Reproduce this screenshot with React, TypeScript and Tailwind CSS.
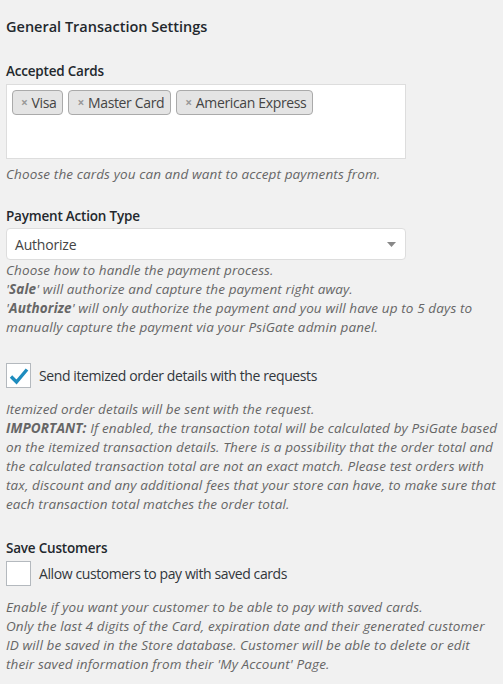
import React from "react";

const Tag = ({ label }: { label: string }) => (
  <span className="flex items-center h-[25px] pl-[8px] pr-[6px] bg-[#e4e4e4] border border-[#aaa] rounded-[4px] text-[14px] text-[#444] tracking-[-0.35px]">
    <span className="text-[#999] text-[12px] mr-[4px] font-bold leading-none">×</span>
    {label}
  </span>
);

const desc = "text-[13.5px] italic text-[#666] leading-[19px] tracking-[0.12px]";

export default function App() {
  return (
    <div
      className="w-[503px] h-[684px] bg-[#f1f1f1] text-[#23282d] overflow-hidden"
      style={{ fontFamily: '"Open Sans", "Noto Sans", sans-serif' }}
    >
      <div className="px-[6px] pt-[17px]">
        <h2 className="text-[14.5px] font-semibold leading-[20px]">General Transaction Settings</h2>

        <div className="mt-[24px]">
          <div className="text-[13.5px] font-semibold leading-[20px] tracking-[-0.2px]">Accepted Cards</div>
          <div className="mt-[3px] w-[400px] h-[75px] bg-white border border-[#ddd] flex items-start gap-[5px] pl-[5px] pt-[5px]">
            <Tag label="Visa" />
            <Tag label="Master Card" />
            <Tag label="American Express" />
          </div>
          <p className={`mt-[6px] ${desc}`}>
            Choose the cards you can and want to accept payments from.
          </p>
        </div>

        <div className="mt-[22px]">
          <div className="text-[13.5px] font-semibold leading-[20px] tracking-[-0.2px]">Payment Action Type</div>
          <div className="mt-[2px] w-[400px] h-[32px] bg-white border border-[#ddd] rounded-[4px] flex items-center justify-between pl-[8px] pr-[9px]">
            <span className="text-[14px] text-[#444] tracking-[-0.2px]">Authorize</span>
            <svg width="9" height="5" viewBox="0 0 9 5"><path d="M0 0h9L4.5 5z" fill="#888" /></svg>
          </div>
          <p className={`mt-[1px] ${desc} w-[480px]`}>
            Choose how to handle the payment process.
            <br />
            '<b className="font-bold">Sale</b>' will authorize and capture the payment right away.
            <br />
            '<b className="font-bold">Authorize</b>' will only authorize the payment and you will have up to 5 days to manually capture the payment via your PsiGate admin panel.
          </p>
        </div>

        <div className="mt-[26px]">
          <label className="flex items-center gap-[8px]">
            <span className="w-[25px] h-[25px] bg-white border border-[#b4b9be] flex items-center justify-center">
              <svg width="20" height="18" viewBox="0 0 20 18">
                <path d="M2 9.5 L7.5 15 L18 2.5" fill="none" stroke="#1e8cbe" strokeWidth="3.4" strokeLinecap="butt" strokeLinejoin="miter" />
              </svg>
            </span>
            <span className="text-[14px] text-[#32373c] tracking-[-0.4px]">Send itemized order details with the requests</span>
          </label>
          <p className={`mt-[12px] ${desc} w-[497px]`}>
            Itemized order details will be sent with the request.
            <br />
            <b className="font-bold">IMPORTANT:</b> If enabled, the transaction total will be calculated by PsiGate based on the itemized transaction details. There is a possibility that the order total and the calculated transaction total are not an exact match. Please test orders with tax, discount and any additional fees that your store can have, to make sure that each transaction total matches the order total.
          </p>
        </div>

        <div className="mt-[24px]">
          <div className="text-[13.5px] font-semibold leading-[20px] tracking-[-0.2px]">Save Customers</div>
          <label className="mt-[3px] flex items-center gap-[8px]">
            <span className="w-[25px] h-[25px] bg-white border border-[#b4b9be]" />
            <span className="text-[14px] text-[#32373c] tracking-[-0.4px]">Allow customers to pay with saved cards</span>
          </label>
          <p className={`mt-[12px] ${desc} w-[486px]`}>
            Enable if you want your customer to be able to pay with saved cards.
            <br />
            Only the last 4 digits of the Card, expiration date and their generated customer ID will be saved in the Store database. Customer will be able to delete or edit their saved information from their 'My Account' Page.
          </p>
        </div>
      </div>
    </div>
  );
}
